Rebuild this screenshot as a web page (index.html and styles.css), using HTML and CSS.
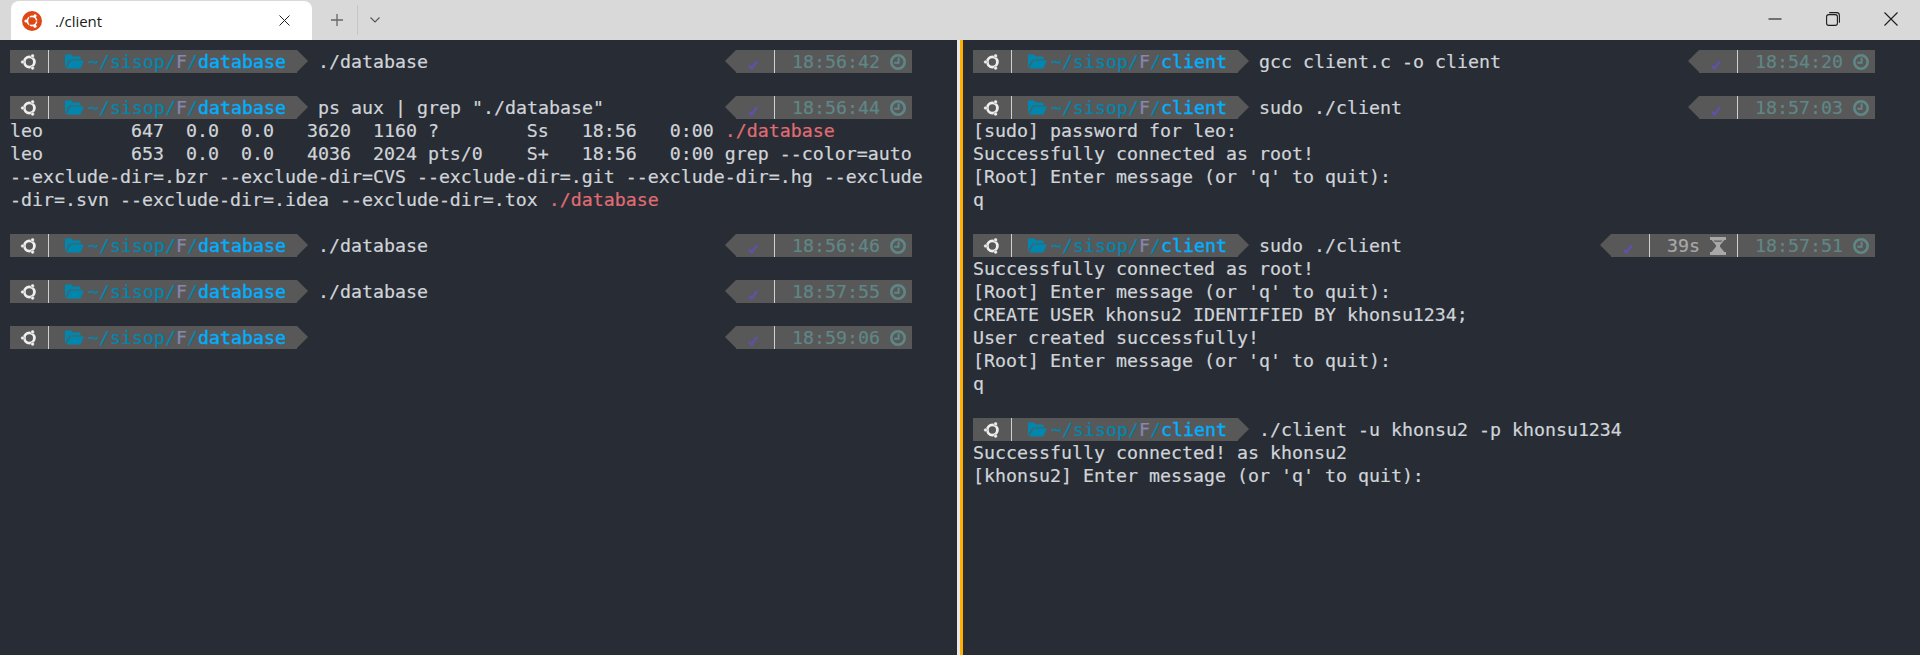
FILE: index.html
```html
<!DOCTYPE html>
<html lang="en">
<head>
<meta charset="utf-8">
<title>./client</title>
<link rel="stylesheet" href="styles.css">
</head>
<body>
<svg class="defs" aria-hidden="true">
  <symbol id="i-ubuntu" viewBox="0 0 20 20">
    <circle cx="10.4" cy="10" r="5.6" fill="none" stroke="currentColor" stroke-width="3.1"/>
    <circle cx="2.8" cy="10" r="2" fill="currentColor" stroke="#585858" stroke-width=".4"/>
    <circle cx="14" cy="3.2" r="2" fill="currentColor" stroke="#585858" stroke-width=".4"/>
    <circle cx="14" cy="16.8" r="2" fill="currentColor" stroke="#585858" stroke-width=".4"/>
  </symbol>
  <symbol id="i-folder" viewBox="0 0 19 15">
    <path d="M0 14V1.6Q0 .6 1 .6H6L8 2.6H14.5Q15.5 2.6 15.5 3.6V5.4H4.6L0 14Z" fill="currentColor"/>
    <path d="M5.4 6.6H19L15.4 14.4H1.2Z" fill="currentColor"/>
  </symbol>
  <symbol id="i-check" viewBox="0 0 10 10">
    <path d="M1 5.6L3.6 8.6L9 1" fill="none" stroke="currentColor" stroke-width="2.4"/>
  </symbol>
  <symbol id="i-clock" viewBox="0 0 16 16">
    <circle cx="8" cy="8" r="6.7" fill="none" stroke="currentColor" stroke-width="2.6"/>
    <path d="M8.6 3.4V8.8H4.2" fill="none" stroke="currentColor" stroke-width="2"/>
  </symbol>
  <symbol id="i-hourglass" viewBox="0 0 16 18">
    <path fill-rule="evenodd" fill="currentColor" d="M0 0H16V3H14.4L10 8.2V9.8L14.4 15H16V18H0V15H1.6L6 9.8V8.2L1.6 3H0ZM3.6 3.4L4.8 4.8H11.2L12.4 3.4Z"/>
  </symbol>
</svg>

<div class="window">
  <header class="titlebar">
    <div class="tab">
      <svg class="tab-logo" viewBox="0 0 20 20" aria-hidden="true">
        <circle cx="10" cy="10" r="10" fill="#dd4814"/>
        <circle cx="10" cy="10" r="4.6" fill="none" stroke="#fff" stroke-width="1.7"/>
        <path d="M10 10H16M10 10L6.6 4.6M10 10L6.6 15.4" stroke="#dd4814" stroke-width="1"/>
        <circle cx="4" cy="10" r="1.6" fill="#fff"/>
        <circle cx="13" cy="4.8" r="1.6" fill="#fff"/>
        <circle cx="13" cy="15.2" r="1.6" fill="#fff"/>
      </svg>
      <span class="tab-title">./client</span>
      <svg class="tab-close" viewBox="0 0 11 11" aria-hidden="true"><path d="M.5 .5L10.5 10.5M10.5 .5L.5 10.5"/></svg>
    </div>
    <svg class="tab-plus" viewBox="0 0 12 12" aria-hidden="true"><path d="M6 0V12M0 6H12"/></svg>
    <div class="tab-divider"></div>
    <svg class="tab-chevron" viewBox="0 0 10 6" aria-hidden="true"><path d="M.5 .5L5 5L9.5 .5"/></svg>
    <div class="controls">
      <div class="control"><svg viewBox="0 0 14 14" aria-hidden="true"><path d="M.5 7H13.5"/></svg></div>
      <div class="control"><svg viewBox="0 0 14 14" aria-hidden="true"><rect x=".6" y="2.6" width="10.8" height="10.8" rx="2.2"/><path d="M3.2 .6H10.6Q13.4 .6 13.4 3.4V10.8"/></svg></div>
      <div class="control"><svg viewBox="0 0 14 14" aria-hidden="true"><path d="M.5 .5L13.5 13.5M13.5 .5L.5 13.5"/></svg></div>
    </div>
  </header>

  <main class="terminal">
    <section class="pane pane-left">
      <div class="prompt">
        <div class="seg-left"><svg class="logo"><use href="#i-ubuntu"/></svg><i class="sep sep-logo"></i><svg class="folder"><use href="#i-folder"/></svg><span class="path"><span class="dim">~/sisop/</span><span class="repo">F</span><span class="dim">/</span><span class="cwd">database</span></span></div>
        <span class="cmd">./database</span>
        <div class="seg-right"><svg class="check"><use href="#i-check"/></svg><i class="sep"></i><span class="time">18:56:42</span><svg class="clock"><use href="#i-clock"/></svg></div>
      </div>
      <div class="line"></div>
      <div class="prompt">
        <div class="seg-left"><svg class="logo"><use href="#i-ubuntu"/></svg><i class="sep sep-logo"></i><svg class="folder"><use href="#i-folder"/></svg><span class="path"><span class="dim">~/sisop/</span><span class="repo">F</span><span class="dim">/</span><span class="cwd">database</span></span></div>
        <span class="cmd">ps aux | grep "./database"</span>
        <div class="seg-right"><svg class="check"><use href="#i-check"/></svg><i class="sep"></i><span class="time">18:56:44</span><svg class="clock"><use href="#i-clock"/></svg></div>
      </div>
      <div class="line">leo        647  0.0  0.0   3620  1160 ?        Ss   18:56   0:00 <span class="match">./database</span></div>
      <div class="line">leo        653  0.0  0.0   4036  2024 pts/0    S+   18:56   0:00 grep --color=auto</div>
      <div class="line">--exclude-dir=.bzr --exclude-dir=CVS --exclude-dir=.git --exclude-dir=.hg --exclude</div>
      <div class="line">-dir=.svn --exclude-dir=.idea --exclude-dir=.tox <span class="match">./database</span></div>
      <div class="line"></div>
      <div class="prompt">
        <div class="seg-left"><svg class="logo"><use href="#i-ubuntu"/></svg><i class="sep sep-logo"></i><svg class="folder"><use href="#i-folder"/></svg><span class="path"><span class="dim">~/sisop/</span><span class="repo">F</span><span class="dim">/</span><span class="cwd">database</span></span></div>
        <span class="cmd">./database</span>
        <div class="seg-right"><svg class="check"><use href="#i-check"/></svg><i class="sep"></i><span class="time">18:56:46</span><svg class="clock"><use href="#i-clock"/></svg></div>
      </div>
      <div class="line"></div>
      <div class="prompt">
        <div class="seg-left"><svg class="logo"><use href="#i-ubuntu"/></svg><i class="sep sep-logo"></i><svg class="folder"><use href="#i-folder"/></svg><span class="path"><span class="dim">~/sisop/</span><span class="repo">F</span><span class="dim">/</span><span class="cwd">database</span></span></div>
        <span class="cmd">./database</span>
        <div class="seg-right"><svg class="check"><use href="#i-check"/></svg><i class="sep"></i><span class="time">18:57:55</span><svg class="clock"><use href="#i-clock"/></svg></div>
      </div>
      <div class="line"></div>
      <div class="prompt">
        <div class="seg-left"><svg class="logo"><use href="#i-ubuntu"/></svg><i class="sep sep-logo"></i><svg class="folder"><use href="#i-folder"/></svg><span class="path"><span class="dim">~/sisop/</span><span class="repo">F</span><span class="dim">/</span><span class="cwd">database</span></span></div>
        <div class="seg-right"><svg class="check"><use href="#i-check"/></svg><i class="sep"></i><span class="time">18:59:06</span><svg class="clock"><use href="#i-clock"/></svg></div>
      </div>
    </section>

    <div class="divider"></div>

    <section class="pane pane-right">
      <div class="prompt">
        <div class="seg-left"><svg class="logo"><use href="#i-ubuntu"/></svg><i class="sep sep-logo"></i><svg class="folder"><use href="#i-folder"/></svg><span class="path"><span class="dim">~/sisop/</span><span class="repo">F</span><span class="dim">/</span><span class="cwd">client</span></span></div>
        <span class="cmd">gcc client.c -o client</span>
        <div class="seg-right"><svg class="check"><use href="#i-check"/></svg><i class="sep"></i><span class="time">18:54:20</span><svg class="clock"><use href="#i-clock"/></svg></div>
      </div>
      <div class="line"></div>
      <div class="prompt">
        <div class="seg-left"><svg class="logo"><use href="#i-ubuntu"/></svg><i class="sep sep-logo"></i><svg class="folder"><use href="#i-folder"/></svg><span class="path"><span class="dim">~/sisop/</span><span class="repo">F</span><span class="dim">/</span><span class="cwd">client</span></span></div>
        <span class="cmd">sudo ./client</span>
        <div class="seg-right"><svg class="check"><use href="#i-check"/></svg><i class="sep"></i><span class="time">18:57:03</span><svg class="clock"><use href="#i-clock"/></svg></div>
      </div>
      <div class="line">[sudo] password for leo:</div>
      <div class="line">Successfully connected as root!</div>
      <div class="line">[Root] Enter message (or 'q' to quit):</div>
      <div class="line">q</div>
      <div class="line"></div>
      <div class="prompt">
        <div class="seg-left"><svg class="logo"><use href="#i-ubuntu"/></svg><i class="sep sep-logo"></i><svg class="folder"><use href="#i-folder"/></svg><span class="path"><span class="dim">~/sisop/</span><span class="repo">F</span><span class="dim">/</span><span class="cwd">client</span></span></div>
        <span class="cmd">sudo ./client</span>
        <div class="seg-right"><svg class="check"><use href="#i-check"/></svg><i class="sep"></i><span class="duration">39s</span><svg class="hourglass"><use href="#i-hourglass"/></svg><i class="sep"></i><span class="time">18:57:51</span><svg class="clock"><use href="#i-clock"/></svg></div>
      </div>
      <div class="line">Successfully connected as root!</div>
      <div class="line">[Root] Enter message (or 'q' to quit):</div>
      <div class="line">CREATE USER khonsu2 IDENTIFIED BY khonsu1234;</div>
      <div class="line">User created successfully!</div>
      <div class="line">[Root] Enter message (or 'q' to quit):</div>
      <div class="line">q</div>
      <div class="line"></div>
      <div class="prompt">
        <div class="seg-left"><svg class="logo"><use href="#i-ubuntu"/></svg><i class="sep sep-logo"></i><svg class="folder"><use href="#i-folder"/></svg><span class="path"><span class="dim">~/sisop/</span><span class="repo">F</span><span class="dim">/</span><span class="cwd">client</span></span></div>
        <span class="cmd">./client -u khonsu2 -p khonsu1234</span>
      </div>
      <div class="line">Successfully connected! as khonsu2</div>
      <div class="line">[khonsu2] Enter message (or 'q' to quit):</div>
    </section>
  </main>
</div>
</body>
</html>
```

FILE: styles.css
```css
* { box-sizing: border-box; }

html, body {
  margin: 0;
  height: 100%;
  overflow: hidden;
  background: #282c34;
}

.defs { position: absolute; width: 0; height: 0; }

.window {
  display: flex;
  flex-direction: column;
  height: 100vh;
}

/* Title bar */
.titlebar {
  display: flex;
  align-items: center;
  flex: 0 0 40px;
  background: #d9d9d9;
  padding-left: 11px;
}

.tab {
  display: flex;
  align-items: center;
  align-self: flex-end;
  width: 301px;
  height: 39px;
  padding-left: 11px;
  background: #fff;
  border-radius: 8px 8px 0 0;
}

.tab-logo { width: 20px; height: 20px; flex: none; }

.tab-title {
  margin-left: 13px;
  font: 15px "Open Sans", sans-serif;
  color: #1a1a1a;
}

.tab-close {
  width: 11px;
  height: 11px;
  margin-left: auto;
  margin-right: 22px;
  fill: none;
  stroke: #222;
  stroke-width: 1;
}

.tab-plus {
  width: 12px;
  height: 12px;
  margin-left: 19px;
  fill: none;
  stroke: #666;
  stroke-width: 1.3;
}

.tab-divider {
  width: 1px;
  height: 30px;
  margin-left: 14px;
  background: #c6c6c6;
}

.tab-chevron {
  width: 10px;
  height: 6px;
  margin-left: 12px;
  fill: none;
  stroke: #555;
  stroke-width: 1.1;
}

.controls { display: flex; margin-left: auto; align-self: stretch; }

.control {
  display: flex;
  align-items: center;
  justify-content: center;
  width: 58px;
  padding-bottom: 2px;
}

.control svg {
  width: 14px;
  height: 14px;
  fill: none;
  stroke: #1c1c1c;
  stroke-width: 1.1;
}

/* Terminal */
.terminal {
  display: flex;
  flex: 1;
  min-height: 0;
}

.pane {
  padding-top: 10px;
  font-family: "DejaVu Sans Mono", monospace;
  font-size: 18.27px;
  -webkit-text-stroke: 0.2px;
  line-height: 23px;
  color: #d0d4d9;
}

.pane-left { flex: 0 0 957px; padding-left: 10px; }
.pane-right { flex: 1; padding-left: 10px; }

.divider {
  flex: 0 0 6px;
  background: linear-gradient(to right, #e8e8e8 0 3px, #ffb000 3px 6px);
}

.line { height: 23px; white-space: pre; }

.match { color: #e06c75; }

.prompt {
  display: flex;
  align-items: stretch;
  width: 902px;
  height: 23px;
  white-space: pre;
}

.seg-left {
  position: relative;
  display: flex;
  align-items: center;
  height: 23px;
  padding-left: 10px;
  padding-right: 11px;
  background: #585858;
}

.seg-left::after {
  content: "";
  position: absolute;
  left: 100%;
  top: 0;
  border-left: 11px solid #585858;
  border-top: 11.5px solid transparent;
  border-bottom: 11.5px solid transparent;
}

.logo { width: 18px; height: 18px; color: #f0f0f0; flex: none; }

.sep {
  flex: none;
  width: 1px;
  height: 23px;
  background: #cfcfcf;
}

.sep-logo { margin-left: 10px; }

.folder {
  width: 19px;
  height: 15px;
  margin-left: 16px;
  margin-right: 4px;
  color: #0087af;
  flex: none;
}

.path { display: block; }
.dim { color: #0087af; }
.repo { color: #8787af; }
.cwd { color: #00afff; -webkit-text-stroke: 0.4px; }

.cmd { margin-left: 21px; }

.seg-right {
  position: relative;
  display: flex;
  align-items: center;
  height: 23px;
  margin-left: auto;
  padding-left: 12px;
  padding-right: 6px;
  background: #585858;
}

.seg-right::before {
  content: "";
  position: absolute;
  right: 100%;
  top: 0;
  border-right: 11px solid #585858;
  border-top: 11.5px solid transparent;
  border-bottom: 11.5px solid transparent;
}

.check {
  width: 10px;
  height: 10px;
  margin-top: 7px;
  margin-right: 16px;
  color: #6050a8;
  flex: none;
}

.time { margin-left: 17px; color: #5f8787; }

.duration { margin-left: 17px; color: #a8a8a8; }

.clock {
  width: 16px;
  height: 16px;
  margin-left: 10px;
  color: #5f8787;
  flex: none;
}

.hourglass {
  width: 16px;
  height: 18px;
  margin-left: 10px;
  margin-right: 11px;
  color: #a8a8a8;
  flex: none;
}
```
